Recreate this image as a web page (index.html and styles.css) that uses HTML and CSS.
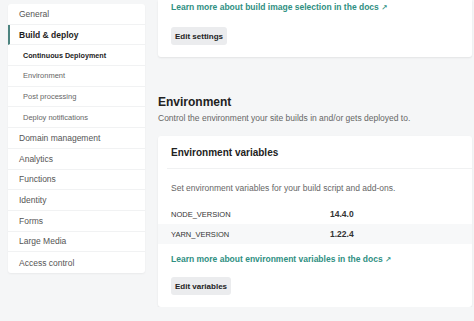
FILE: index.html
```html
<!DOCTYPE html>
<html lang="en">
<head>
    <meta charset="UTF-8">
    <title>Build &amp; deploy settings</title>
    <link rel="stylesheet" href="styles.css">
</head>
<body>
<div class="page">
    <ul class="side-nav">
        <li class="nav-item">General</li>
        <li class="nav-item active">Build &amp; deploy</li>
        <li class="nav-sub current">Continuous Deployment</li>
        <li class="nav-sub">Environment</li>
        <li class="nav-sub">Post processing</li>
        <li class="nav-sub">Deploy notifications</li>
        <li class="nav-item">Domain management</li>
        <li class="nav-item">Analytics</li>
        <li class="nav-item">Functions</li>
        <li class="nav-item">Identity</li>
        <li class="nav-item">Forms</li>
        <li class="nav-item">Large Media</li>
        <li class="nav-item">Access control</li>
    </ul>
    <div class="main">
        <div class="card card-top">
            <a class="doc-link" href="#">Learn more about build image selection in the docs <span class="arrow">↗</span></a>
            <button class="btn">Edit settings</button>
        </div>

        <h2 class="section-title">Environment</h2>
        <p class="section-desc">Control the environment your site builds in and/or gets deployed to.</p>

        <div class="card">
            <div class="card-head">Environment variables</div>
            <div class="card-body">
                <p class="card-text">Set environment variables for your build script and add-ons.</p>
                <dl class="vars">
                    <div class="var-row"><dt>NODE_VERSION</dt><dd>14.4.0</dd></div>
                    <div class="var-row odd"><dt>YARN_VERSION</dt><dd>1.22.4</dd></div>
                </dl>
                <a class="doc-link" href="#">Learn more about environment variables in the docs <span class="arrow">↗</span></a>
                <button class="btn">Edit variables</button>
            </div>
        </div>
    </div>
</div>
</body>
</html>
```

FILE: styles.css
```css
*{margin:0; padding:0; list-style:none; box-sizing:border-box;}
body{background:#f5f6f7; font-family:"Liberation Sans", Arial, sans-serif; color:#333; overflow:hidden;}
.page{display:flex; gap:13px; padding:0 2px 0 8px; align-items:flex-start;}

/* sidebar */
.side-nav{width:137px; flex:none; margin-top:4px; background:#fff; border-radius:3px; box-shadow:0 1px 2px rgba(0,0,0,.05);}
.side-nav li{height:20.7px; display:flex; align-items:center; border-bottom:1px solid #f1f2f3;}
.side-nav li:last-child{border-bottom:0;}
.nav-item{padding-left:11px; font-size:8.5px; color:#555;}
.nav-item.active{font-weight:bold; color:#1d1d1d; border-left:2px solid #4d8480; padding-left:9px;}
.nav-sub{padding-left:15px; font-size:7.5px; color:#666;}
.nav-sub.current{font-weight:bold; color:#222; font-size:7.2px;}

/* main column */
.main{flex:1; min-width:0;}
.card{background:#fff; border-radius:3px; box-shadow:0 1px 2px rgba(0,0,0,.08);}
.card-top{padding:1px 13px 12px; border-radius:0 0 3px 3px;}
.doc-link{display:block; font-size:8.5px; line-height:12px; font-weight:bold; color:#2f8f82; text-decoration:none;}
.arrow{font-family:"DejaVu Sans", sans-serif; font-size:7.5px; font-weight:bold;}
.btn{display:block; height:18px; padding:0 4px; margin-top:13px; border:0; border-radius:3px; background:#ebecee;
font-family:inherit; font-size:8px; font-weight:bold; color:#222;}

.section-title{margin-top:37px; font-size:12px; line-height:16px; font-weight:600; color:#222;}
.section-desc{margin:2px 0 12px; font-size:8.5px; line-height:12px; color:#666;}

.card-head{height:33px; display:flex; align-items:center; margin-left:9px; padding-left:4px; border-bottom:1px solid #f0f1f2;
font-size:10px; font-weight:bold; color:#222;}
.card-body{padding:13px 0 12px;}
.card-text{padding:0 13px; font-size:8.5px; line-height:12px; color:#666;}
.vars{margin:10px 0 9px;}
.var-row{display:grid; grid-template-columns:159px 1fr; align-items:center; height:20px; padding-left:13px; font-size:7.5px; color:#333;}
.var-row.odd{background:#f7f8f9;}
.var-row dd{font-size:8.5px; font-weight:bold;}
.card-body .doc-link{padding:0 13px;}
.card-body .btn{margin:11px 0 0 13px;}
```
